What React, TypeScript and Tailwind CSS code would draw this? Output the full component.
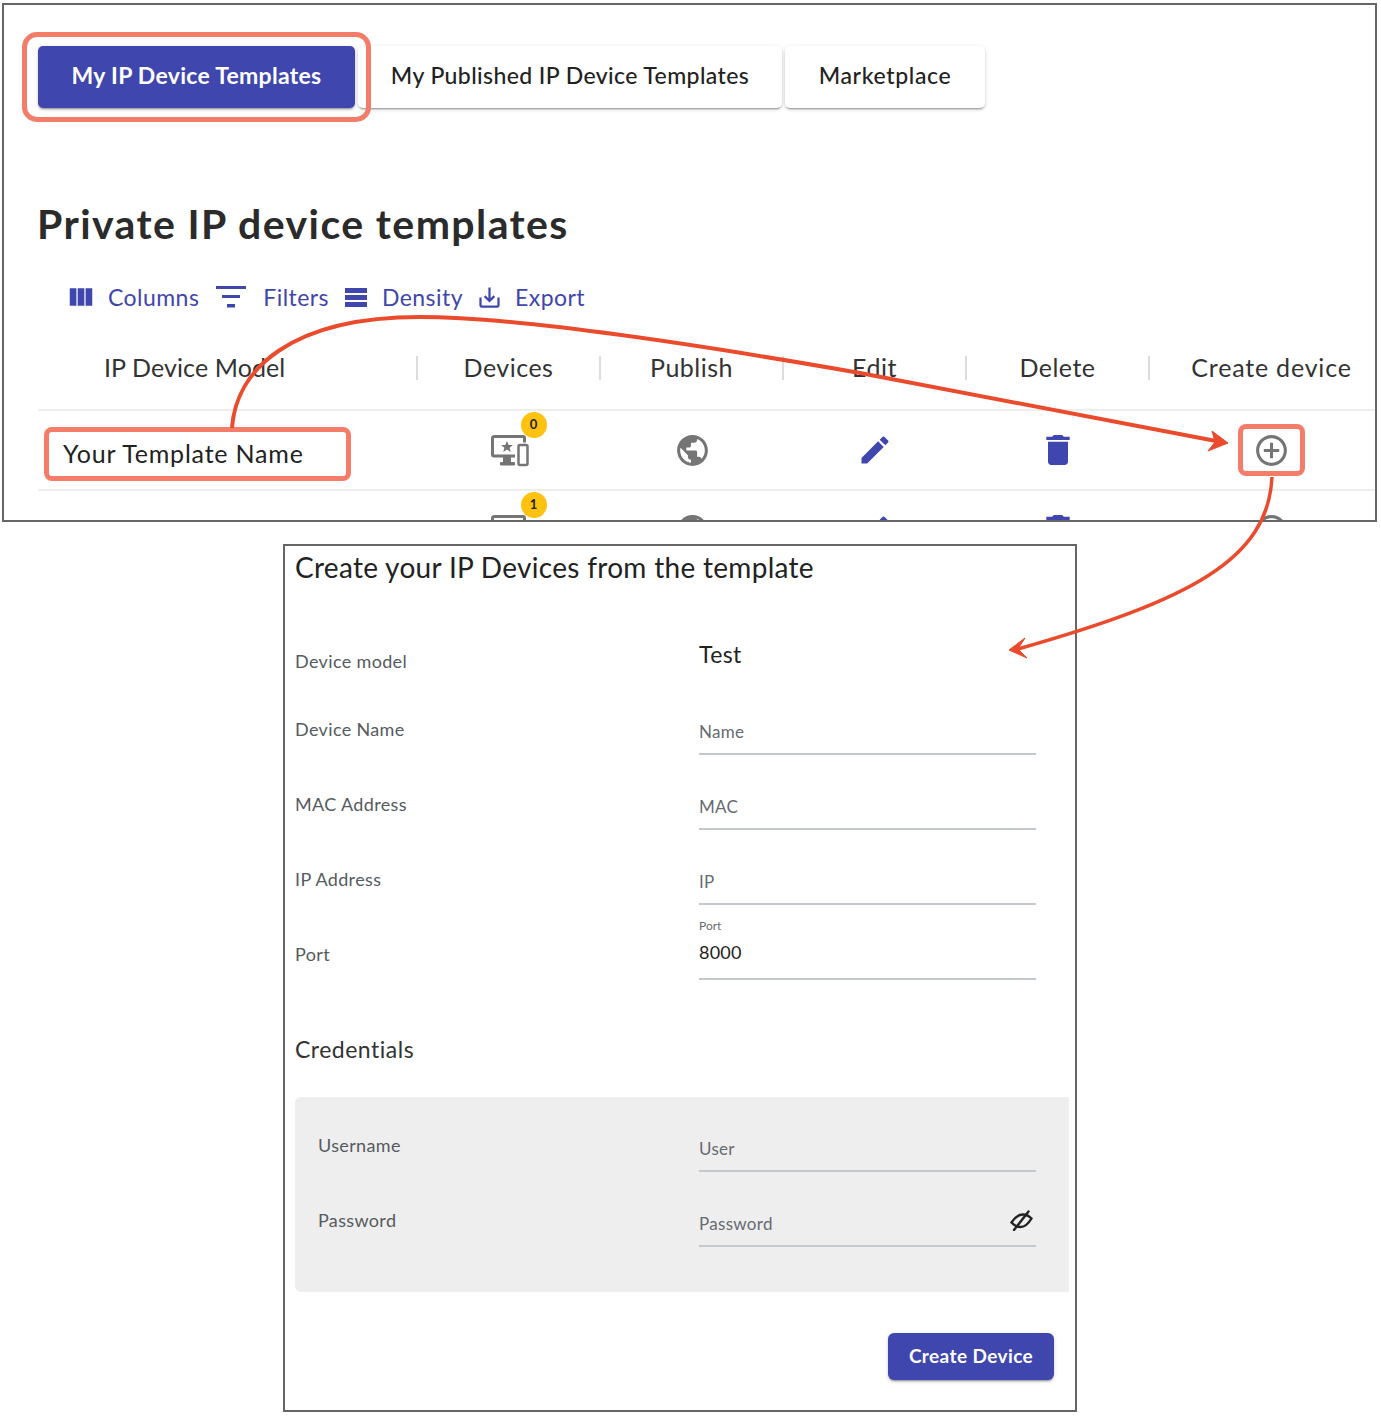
import React from "react";
import { MdViewColumn, MdSaveAlt, MdPublic, MdEdit, MdDelete, MdAddCircleOutline } from "react-icons/md";

const elevation = "shadow-[0_3px_1px_-2px_rgba(0,0,0,0.2),0_2px_2px_0_rgba(0,0,0,0.14),0_1px_5px_0_rgba(0,0,0,0.12)]";

function DeviceIcon() {
  return (
    <svg width="38" height="32" viewBox="0 0 38 32" fill="none" className="text-[#757575]">
      <path d="M24 21H3a1.5 1.5 0 0 1-1.5-1.5V3A1.5 1.5 0 0 1 3 1.5h29A1.5 1.5 0 0 1 33.500 3v4.500" stroke="currentColor" strokeWidth="3" />
      <path d="M16 6l1.700 4h4.300l-3.400 2.700 1.200 4.300-3.800-2.500-3.800 2.500 1.200-4.300L10 10h4.300z" fill="currentColor" />
      <rect x="12" y="21" width="8" height="6" fill="currentColor" />
      <rect x="9" y="27" width="15" height="3.500" rx="1" fill="currentColor" />
      <rect x="27.500" y="10" width="9" height="20" rx="1.500" stroke="currentColor" strokeWidth="2.500" />
    </svg>
  );
}

function FilterIcon() {
  return (
    <svg width="30" height="22" viewBox="0 0 30 22" className="text-[#3f46ad]" fill="currentColor">
      <rect x="0" y="0" width="30" height="3" />
      <rect x="6" y="9" width="18" height="3" />
      <rect x="11" y="18" width="8" height="3.500" />
    </svg>
  );
}

function DensityIcon() {
  return (
    <svg width="22" height="19" viewBox="0 0 22 19" className="text-[#3f46ad]" fill="currentColor">
      <rect x="0" y="0" width="22" height="5" />
      <rect x="0" y="7" width="22" height="5" />
      <rect x="0" y="14" width="22" height="5" />
    </svg>
  );
}

function EyeOff() {
  return (
    <svg width="23" height="21" viewBox="0 0 23 21" fill="none" stroke="#222" strokeWidth="2.400" strokeLinecap="round">
      <path d="M1.500 12.500C5 7 9 4.500 13 4.500c3.500 0 6 1.500 8.500 4-3 5-7 8.500-11 8.500-3.500 0-6.500-1.500-9-4.500z" />
      <path d="M18.500 1.500L4 20" />
    </svg>
  );
}

const columns = ["Devices", "Publish", "Edit", "Delete"];
const tableCols = "grid grid-cols-[380px_183px_183px_183px_183px_245px]";

function TemplateRow({ name, count }: { name: string; count: number }) {
  return (
    <div className={`${tableCols} h-[80px] border-b-2 border-[#eeeeee] items-center`}>
      <div className="pl-[25px] pt-[7px] text-[25px] text-[#222] tracking-[0.8px] whitespace-nowrap">{name}</div>
      <div className="flex justify-center pt-[2px]">
        <div className="relative flex">
          <DeviceIcon />
          <span className="absolute left-[30px] top-[-23px] w-[26px] h-[26px] rounded-full bg-[#fec20f] text-[13px] font-bold text-[#222] flex items-center justify-center">
            {count}
          </span>
        </div>
      </div>
      <div className="flex justify-center"><MdPublic size={37} className="text-[#757575]" /></div>
      <div className="flex justify-center pr-[1px]"><MdEdit size={36} className="text-[#3f46ad]" /></div>
      <div className="flex justify-center pr-[1px]"><MdDelete size={40} className="text-[#3f46ad]" /></div>
      <div className="flex justify-center pr-[2px]"><MdAddCircleOutline size={37} className="text-[#757575]" /></div>
    </div>
  );
}

function Field({ label, hint, value, small, children, inset }: { label: string; hint?: string; value?: string; small?: string; children?: React.ReactNode; inset?: boolean }) {
  return (
    <div className={`grid ${inset ? "grid-cols-[381px_337px]" : "grid-cols-[404px_337px]"} h-[75px] items-end`}>
      <div className={`${inset ? "pb-[13px]" : "pb-[12px]"} text-[18px] text-[#555b60] tracking-[0.35px]`}>{label}</div>
      <div className="relative h-[56px] border-b-2 border-[#c3c9cd] flex items-end pb-[9px]">
        {small && <span className="absolute left-0 top-[-7px] text-[12px] text-[#666b70]">{small}</span>}
        {hint && <span className="text-[17px] text-[#666b70] tracking-[0.3px]">{hint}</span>}
        {value && <span className="text-[18px] text-[#222] tracking-[0.2px] pb-[3px]">{value}</span>}
        {children}
      </div>
    </div>
  );
}

export default function App() {
  return (
    <div className="relative w-[1381px] h-[1426px] bg-white overflow-hidden font-['Lato',sans-serif] pt-[3px] pl-[2px]">
      {/* Top panel */}
      <section className="w-[1375px] h-[519px] border-2 border-[#666666] overflow-hidden pl-[34px]">
        <div className="flex gap-[3px] pt-[41px]">
          <button className={`h-[62px] w-[317px] pb-[4px] rounded-[5px] bg-[#3f46ad] text-white text-[23px] font-bold tracking-[0.28px] ${elevation}`}>
            My IP Device Templates
          </button>
          <button className={`h-[62px] w-[424px] pb-[4px] rounded-[5px] bg-white text-[#222] text-[23px] font-medium tracking-[0.4px] ${elevation}`}>
            My Published IP Device Templates
          </button>
          <button className={`h-[62px] w-[200px] pb-[4px] rounded-[5px] bg-white text-[#222] text-[23px] font-medium tracking-[0.65px] ${elevation}`}>
            Marketplace
          </button>
        </div>

        <h1 className="mt-[91px] -ml-[1px] text-[41px] leading-[50px] font-bold text-[#2b2b2b] tracking-[1.4px]">
          Private IP device templates
        </h1>

        <div className="flex items-center mt-[31px] ml-[28px] h-[34px] text-[23px] text-[#3f46ad] tracking-[0.45px]">
          <MdViewColumn size={30} />
          <span className="ml-[12px]">Columns</span>
          <span className="ml-[17px] flex"><FilterIcon /></span>
          <span className="ml-[17px]">Filters</span>
          <span className="ml-[16px] flex"><DensityIcon /></span>
          <span className="ml-[15px]">Density</span>
          <span className="ml-[13px] flex"><MdSaveAlt size={27} /></span>
          <span className="ml-[12px]">Export</span>
        </div>

        <div className="mt-[12px]">
          <div className={`${tableCols} h-[85px] border-b-2 border-[#eeeeee] items-center text-[25px] text-[#333] tracking-[0.5px]`}>
            <div className="pl-[66px] border-r-2 border-[#dddddd] h-[24px] flex items-center tracking-[0.1px]">IP Device Model</div>
            {columns.map((c) => (
              <div key={c} className="text-center border-r-2 border-[#dddddd] h-[24px] flex items-center justify-center">{c}</div>
            ))}
            <div className="text-center pr-[2px] whitespace-nowrap tracking-[0.8px]">Create device</div>
          </div>
          <TemplateRow name="Your Template Name" count={0} />
          <TemplateRow name="Awesome Cool Private Model" count={1} />
        </div>
      </section>

      {/* Create device panel */}
      <section className="ml-[281px] mt-[22px] w-[794px] h-[868px] border-2 border-[#666666] pl-[10px]">
        <h2 className="pt-[1px] text-[28px] leading-[40px] text-[#222] tracking-[0.3px]">Create your IP Devices from the template</h2>

        <div className="mt-[47px] grid grid-cols-[404px_337px] h-[44px]">
          <div className="pt-[14px] text-[18px] text-[#555b60] tracking-[0.35px]">Device model</div>
          <div className="text-[23px] text-[#222] tracking-[0.4px] pt-[3px]">Test</div>
        </div>
        <div className="mt-[2px]">
          <Field label="Device Name" hint="Name" />
          <Field label="MAC Address" hint="MAC" />
          <Field label="IP Address" hint="IP" />
          <Field label="Port" value="8000" small="Port" />
        </div>

        <h3 className="mt-[52px] text-[23px] leading-[34px] text-[#333] tracking-[0.5px]">Credentials</h3>

        <div className="mt-[31px] w-[774px] h-[195px] rounded-l-[6px] bg-[#eeeeee] pl-[23px]">
          <Field label="Username" hint="User" inset />
          <Field label="Password" hint="Password" inset>
            <span className="absolute right-[3px] top-[19px] flex"><EyeOff /></span>
          </Field>
        </div>

        <div className="flex justify-end w-[759px] mt-[41px]">
          <button className={`w-[166px] h-[47px] rounded-[6px] bg-[#3f46ad] text-white text-[19px] font-bold tracking-[0.4px] ${elevation}`}>
            Create Device
          </button>
        </div>
      </section>

      {/* Annotation highlights */}
      <div className="absolute left-[22px] top-[32px] w-[349px] h-[90px] border-[5px] border-[#f47d6a] rounded-[15px]" />
      <div className="absolute left-[44px] top-[427px] w-[307px] h-[54px] border-[5px] border-[#f47d6a] rounded-[8px]" />
      <div className="absolute left-[1238px] top-[424px] w-[67px] h-[52px] border-[5px] border-[#f47d6a] rounded-[8px]" />

      {/* Annotation arrows */}
      <svg className="absolute left-0 top-0 pointer-events-none" width="1381" height="1426" viewBox="0 0 1381 1426" fill="none">
        <path d="M232 428C236 370 290 317 420 317C520 317 700 345 860 373L1216 441" stroke="#e94b2c" strokeWidth="4" />
        <path d="M1228 443L1212 431L1215 442L1208 451Z" fill="#e94b2c" stroke="#e94b2c" strokeWidth="1" strokeLinejoin="round" />
        <path d="M1272 477C1268 560 1190 600 1018 649" stroke="#e94b2c" strokeWidth="3.500" />
        <path d="M1009 650L1025 638L1018 649L1027 658Z" fill="#e94b2c" stroke="#e94b2c" strokeWidth="1" strokeLinejoin="round" />
      </svg>
    </div>
  );
}
